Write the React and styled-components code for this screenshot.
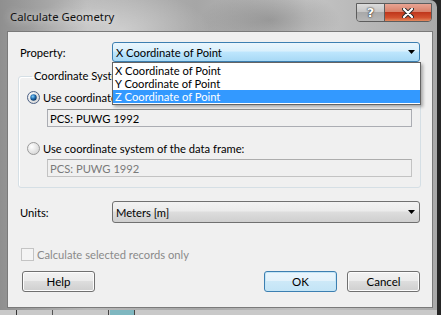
import React from 'react';
import styled, {createGlobalStyle} from 'styled-components';

const GlobalStyle = createGlobalStyle`
  html, body {
    margin: 0;
    padding: 0;
    background: #262626;
    overflow: hidden;
  }
  body {
    font-family: Lato, "Noto Sans", sans-serif;
    font-size: 11.2px;
    color: #000;
  }
`;

const Screen = styled.div`
  width: 441px;
  height: 315px;
  display: flex;
  flex-direction: column;
`;

const Window = styled.div`
  width: 437px;
  height: 310px;
  box-sizing: border-box;
  padding: 0 4px 2px 7px;
  display: flex;
  flex-direction: column;
  border-radius: 0 7px 0 0;
  background:
    radial-gradient(ellipse 90px 40px at 120px 30px, rgba(255,255,255,0.35), transparent),
    radial-gradient(ellipse 70px 30px at 270px 20px, rgba(90,90,90,0.35), transparent),
    linear-gradient(90deg, #8f8f8f 0%, #b9b9b9 20%, #a6a6a6 45%, #c4c4c4 70%, #a9a9a9 100%);
`;

const TitleBar = styled.div`
  height: 31px;
  display: flex;
  align-items: flex-start;
`;

const Title = styled.span`
  margin: 9px 0 0 3px;
  font-family: "Noto Sans", sans-serif;
  font-size: 11.3px;
  color: #111;
  text-shadow: 0 0 8px rgba(255,255,255,0.9);
`;

const CaptionButtons = styled.div`
  margin: 3px 1px 0 auto;
  display: flex;
  border: 1px solid #5d5d5d;
  border-radius: 0 0 4px 4px;
  overflow: hidden;
`;

const CaptionButton = styled.div`
  width: ${({w}) => w}px;
  height: 17px;
  display: flex;
  align-items: center;
  justify-content: center;
  font-family: "DejaVu Sans", sans-serif;
  font-weight: bold;
  font-size: 13px;
  color: #fff;
  text-shadow: 0 0 1px #222, 0 0 2px #222;
  background: ${({red}) => red
    ? 'linear-gradient(#e8a493 0%, #d9826b 45%, #c0371c 50%, #d2512f 80%, #e28a5f 100%)'
    : 'linear-gradient(#dcdcdc 0%, #c6c6c6 45%, #a9a9a9 50%, #b6b6b6 100%)'};
  & + & { border-left: 1px solid #5d5d5d; }
`;

const Client = styled.div`
  flex: 1;
  box-sizing: border-box;
  border: 1px solid #7a7a7a;
  background: #f0f0f0;
  padding: 10px 11px 0 10px;
  display: flex;
  flex-direction: column;
`;

const Row = styled.div`
  display: flex;
  align-items: center;
  height: ${({h}) => h || 20}px;
  margin-top: ${({top}) => top || 0}px;
`;

const Label = styled.span`
  width: 92px;
  padding-left: 2px;
`;

const SelectWrap = styled.div`
  position: relative;
  width: 308px;
  height: 100%;
`;

const Select = styled.div`
  box-sizing: border-box;
  height: 100%;
  display: flex;
  align-items: center;
  padding: 0 0 0 3px;
  border: 1px solid ${({focus}) => focus ? '#3c7fb1' : '#707070'};
  border-radius: 3px;
  background: ${({focus}) => focus
    ? 'linear-gradient(#eaf6fd 0%, #d9f0fc 45%, #bee6fd 50%, #a7d9f5 100%)'
    : 'linear-gradient(#f2f2f2 0%, #ebebeb 45%, #dddddd 50%, #cfcfcf 100%)'};
`;

const SelectText = styled.span`
  flex: 1;
`;

const Arrow = styled.svg`
  width: 7px;
  height: 4px;
  margin-right: 4px;
`;

const List = styled.ul`
  position: absolute;
  left: 0;
  top: 100%;
  width: 309px;
  box-sizing: border-box;
  margin: 0;
  padding: 1px 0;
  list-style: none;
  background: #fff;
  border: 1px solid #646464;
  box-shadow: 2px 2px 3px rgba(0,0,0,0.3);
  z-index: 2;
`;

const ListItem = styled.li`
  height: 13px;
  line-height: 13px;
  padding-left: 2px;
  background: ${({selected}) => selected ? '#3399ff' : 'transparent'};
  color: ${({selected}) => selected ? '#fff' : '#000'};
`;

const Group = styled.fieldset`
  margin: 7px 0 0 0;
  padding: 0 8px 0 8px;
  border: 1px solid #d5dfe5;
  border-radius: 3px;
  box-shadow: inset 1px 1px 0 #fff;
  display: flex;
  flex-direction: column;
  height: 119px;
  box-sizing: border-box;
`;

const Legend = styled.legend`
  margin-left: 5px;
  padding: 0 2px;
  line-height: 14px;
`;

const RadioRow = styled.label`
  display: flex;
  align-items: center;
  gap: 3px;
  height: 14px;
  margin-top: ${({top}) => top}px;
`;

const Field = styled.div`
  box-sizing: border-box;
  height: 18px;
  margin: ${({top}) => top}px 0 0 20px;
  width: 365px;
  border: 1px solid ${({disabled}) => disabled ? '#c3c3c3' : '#abadb3'};
  border-top-color: ${({disabled}) => disabled ? '#adadad' : '#8e8f8f'};
  background: #f0f0f0;
  display: flex;
  align-items: center;
  padding-left: 2px;
  color: ${({disabled}) => disabled ? '#7a7a7a' : '#000'};
`;

const CheckRow = styled.label`
  display: flex;
  align-items: center;
  gap: 3px;
  height: 13px;
  margin: 25px 0 0 3px;
  color: #8a8a8a;
`;

const CheckBox = styled.span`
  width: 11px;
  height: 11px;
  border: 1px solid #c4c4c4;
  background: #f4f4f4;
`;

const Buttons = styled.div`
  display: flex;
  margin-top: 10px;
  padding: 0 1px 0 4px;
`;

const Button = styled.button`
  width: ${({w}) => w || 73}px;
  height: 21px;
  margin-left: ${({ml}) => ml || 0}px;
  font-family: inherit;
  font-size: 11.5px;
  color: #000;
  border: 1px solid ${({primary}) => primary ? '#3c7fb1' : '#707070'};
  border-radius: 3px;
  box-shadow: inset 0 0 0 1px ${({primary}) => primary ? '#c4e5f6' : '#fcfcfc'};
  background: ${({primary}) => primary
    ? 'linear-gradient(#eaf6fd 0%, #e3f2fb 45%, #cde9f8 50%, #c3e4f6 100%)'
    : 'linear-gradient(#f2f2f2 0%, #ebebeb 45%, #dddddd 50%, #cfcfcf 100%)'};
  padding: 0;
`;

const Spacer = styled.div`
  flex: 1;
`;

const Backdrop = styled.div`
  height: 5px;
  width: 437px;
  background:
    linear-gradient(90deg, transparent 0 16px, #333 16px 17px, transparent 17px 52px, #555 52px 53px, transparent 53px 108px, #444 108px 109px, transparent 109px 110px, #7fb7c0 110px 134px, #444 134px 135px, transparent 135px),
    #c9c9c9;
`;

function Radio({checked}) {
  return (
    <svg width="13" height="13" viewBox="0 0 13 13">
      <defs>
        <radialGradient id={checked ? 'rg1' : 'rg2'} cx="0.35" cy="0.35" r="0.7">
          <stop offset="0" stopColor="#ffffff" />
          <stop offset="1" stopColor="#d6d6d6" />
        </radialGradient>
        <radialGradient id="dot" cx="0.4" cy="0.35" r="0.6">
          <stop offset="0" stopColor="#8ad2f8" />
          <stop offset="0.6" stopColor="#1c6ab0" />
          <stop offset="1" stopColor="#0d3b6b" />
        </radialGradient>
      </defs>
      <circle cx="6.5" cy="6.5" r="6" fill={`url(#${checked ? 'rg1' : 'rg2'})`} stroke={checked ? '#4d6185' : '#9a9a9a'} />
      {checked && <circle cx="6.5" cy="6.5" r="3.2" fill="url(#dot)" />}
    </svg>
  );
}

function DownArrow() {
  return (
    <Arrow viewBox="0 0 7 4">
      <path d="M0 0 H7 L3.5 4 Z" fill="#000" />
    </Arrow>
  );
}

const options = ['X Coordinate of Point', 'Y Coordinate of Point', 'Z Coordinate of Point'];

export default function App() {
  return (
    <Screen>
      <GlobalStyle />
      <Window>
        <TitleBar>
          <Title>Calculate Geometry</Title>
          <CaptionButtons>
            <CaptionButton w={27}>?</CaptionButton>
            <CaptionButton w={46} red>
              <svg width="12" height="10" viewBox="0 0 12 10">
                <path d="M2 1 L10 9 M10 1 L2 9" stroke="#2a2a2a" strokeWidth="4" strokeLinecap="round" />
                <path d="M2 1 L10 9 M10 1 L2 9" stroke="#fff" strokeWidth="2.2" strokeLinecap="round" />
              </svg>
            </CaptionButton>
          </CaptionButtons>
        </TitleBar>
        <Client>
          <Row>
            <Label>Property:</Label>
            <SelectWrap>
              <Select focus>
                <SelectText>X Coordinate of Point</SelectText>
                <DownArrow />
              </Select>
              <List>
                {options.map((opt, i) => (
                  <ListItem key={'opt-' + i} selected={i === 2}>{opt}</ListItem>
                ))}
              </List>
            </SelectWrap>
          </Row>
          <Group>
            <Legend>Coordinate System</Legend>
            <RadioRow top={7}>
              <Radio checked />
              <span>Use coordinate system of the feature source:</span>
            </RadioRow>
            <Field top={5}>PCS: PUWG 1992</Field>
            <RadioRow top={14}>
              <Radio />
              <span>Use coordinate system of the data frame:</span>
            </RadioRow>
            <Field top={4} disabled>PCS: PUWG 1992</Field>
          </Group>
          <Row top={13} h={22}>
            <Label>Units:</Label>
            <SelectWrap>
              <Select>
                <SelectText>Meters [m]</SelectText>
                <DownArrow />
              </Select>
            </SelectWrap>
          </Row>
          <CheckRow>
            <CheckBox />
            <span>Calculate selected records only</span>
          </CheckRow>
          <Buttons>
            <Button>Help</Button>
            <Spacer />
            <Button primary>OK</Button>
            <Button ml={10}>Cancel</Button>
          </Buttons>
        </Client>
      </Window>
      <Backdrop />
    </Screen>
  );
}
